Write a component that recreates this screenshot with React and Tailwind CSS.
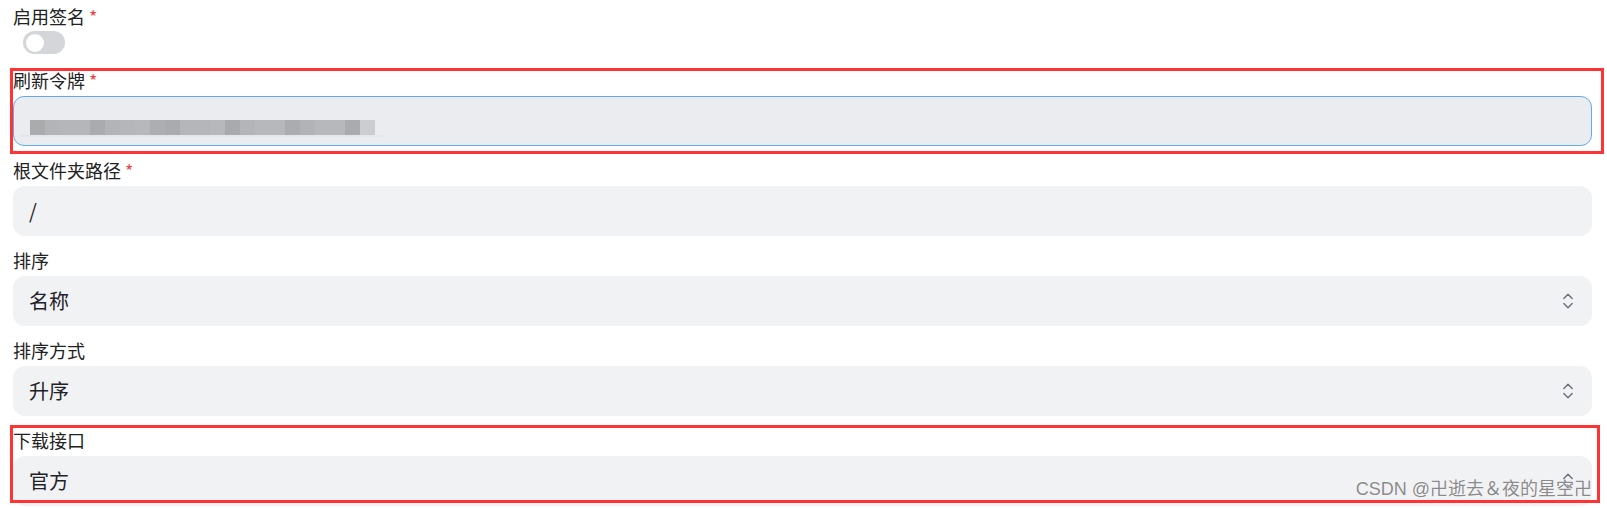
import { ChevronsUpDown } from 'lucide-react';

const blurBlocks = [
  'bg-[#a9abad]', 'bg-[#b2b4b7]', 'bg-[#b4b6b9]', 'bg-[#b4b6b9]', 'bg-[#a9abae]',
  'bg-[#b2b4b7]', 'bg-[#b4b6b9]', 'bg-[#b6b8bb]', 'bg-[#acaeb1]', 'bg-[#a9abae]',
  'bg-[#b4b6b9]', 'bg-[#b4b6b9]', 'bg-[#b6b8bb]', 'bg-[#a8aaad]', 'bg-[#b3b5b8]',
  'bg-[#b6b8bb]', 'bg-[#b6b8bb]', 'bg-[#aaacaf]', 'bg-[#b1b3b6]', 'bg-[#b6b8bb]',
  'bg-[#b6b8bb]', 'bg-[#a9abae]', 'bg-[#cbcdd0]',
];

function Label({ text, required }) {
  return (
    <div className="h-6 leading-6 text-[18px] text-[#222]">
      {text}
      {required && <span className="ml-1 text-[#ef4444]">*</span>}
    </div>
  );
}

function Select({ value }) {
  return (
    <div className="mt-1 h-[50px] rounded-xl bg-[#f1f2f4] pl-4 pr-[14px] flex items-center justify-between text-[20px] text-[#1f2328]">
      <span>{value}</span>
      <ChevronsUpDown size={20} strokeWidth={1.75} className="text-[#6b7280]" />
    </div>
  );
}

export default function App() {
  return (
    <div
      className="min-h-screen bg-white pt-1 pl-[13px] pr-[15px] flex flex-col"
      style={{ fontFamily: '"Noto Sans CJK SC", "Noto Sans", sans-serif' }}
    >
      <div className="pb-[14px]">
        <Label text="启用签名" required />
        <div className="mt-[3px] ml-[10px] w-[42px] h-[23px] rounded-full bg-[#d4d6da] flex items-center pl-[3px]">
          <div className="w-[18px] h-[18px] rounded-full bg-white" />
        </div>
      </div>

      <div className="relative pb-3">
        <Label text="刷新令牌" required />
        <div className="mt-1 h-[50px] rounded-[11px] border-[1.5px] border-[#62aaee] bg-[#ebecef] pl-4 pt-[23px]">
          <div className="flex flex-col w-fit">
            <div className="flex h-[15px]">
              {blurBlocks.map((c, i) => (
                <div key={i} className={`w-[15px] h-[15px] ${c}`} />
              ))}
            </div>
            <div className="-ml-[10px] w-[364px] h-[2px] bg-[#e2e7ed]" />
          </div>
        </div>
        <div className="absolute -left-[3px] top-0 -right-[12px] bottom-[4px] border-[3px] border-[#ff3333] pointer-events-none" />
      </div>

      <div className="pb-3">
        <Label text="根文件夹路径" required />
        <div className="mt-1 h-[50px] rounded-xl bg-[#f1f2f4] px-4 flex items-center text-[20px] text-[#1f2328]">
          /
        </div>
      </div>

      <div className="pb-3">
        <Label text="排序" />
        <Select value="名称" />
      </div>

      <div className="pb-3">
        <Label text="排序方式" />
        <Select value="升序" />
      </div>

      <div className="relative">
        <Label text="下载接口" />
        <Select value="官方" />
        <div className="absolute -left-[3px] -top-[3px] -right-[8px] bottom-[3px] border-[3px] border-[#ff3333] pointer-events-none" />
        <div
          className="absolute right-0 bottom-[8px] text-[18px] leading-none text-[#8a8a8a] whitespace-nowrap"
          style={{ fontFamily: '"Liberation Sans", "Noto Sans CJK SC", sans-serif', textShadow: '0 0 1px #fff, 0 0 1px #fff' }}
        >
          CSDN @卍逝去＆夜的星空卍
        </div>
      </div>
    </div>
  );
}
